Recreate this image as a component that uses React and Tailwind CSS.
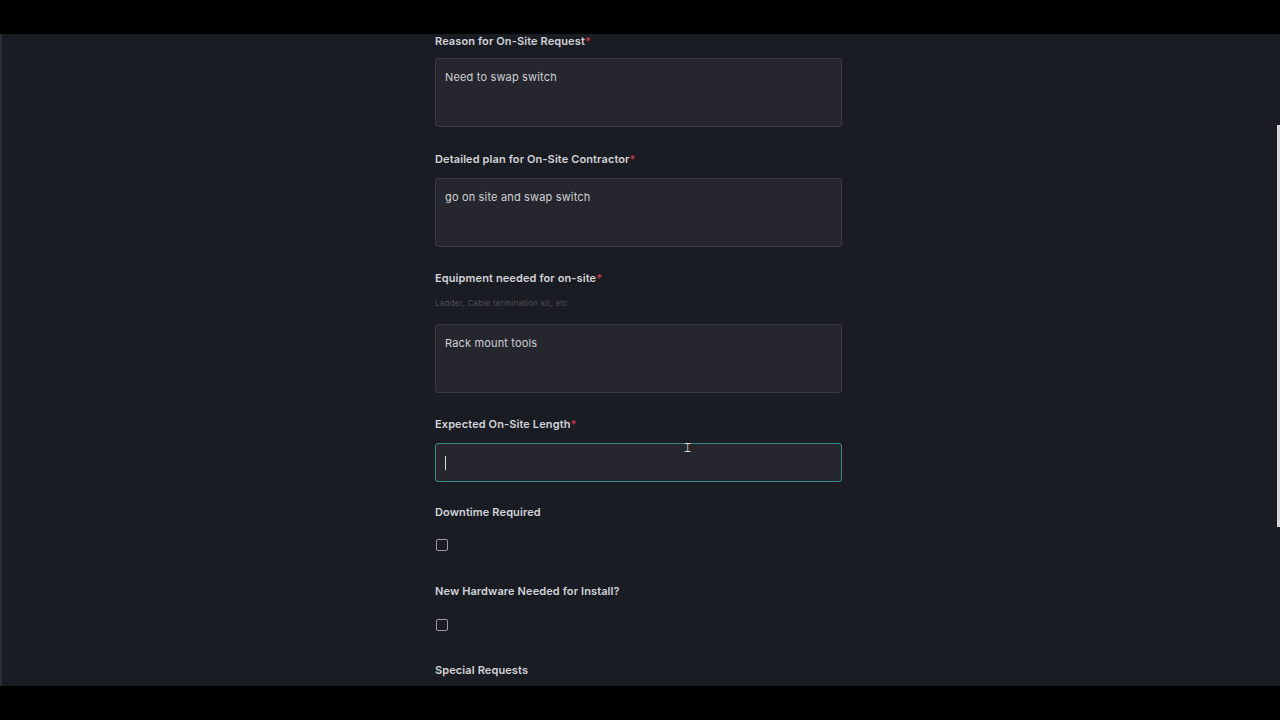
function Label({ children, required }) {
  return (
    <div className="text-[11px] leading-[10px] font-semibold text-[#d2d3d8] tracking-[0.01em]">
      {children}
      {required && <span className="text-[#c2344d]">*</span>}
    </div>
  );
}

function TextBox({ value }) {
  return (
    <div className="h-[69px] w-full rounded-[3px] border border-[#3a3b43] bg-[#26272e] px-[9px] pt-[10px] text-[11px] leading-4 tracking-[0.015em] text-[#cfd0d5]">
      {value}
    </div>
  );
}

function CheckBox() {
  return <div className="ml-px h-3 w-3 rounded-[2px] border-[1.5px] border-[#9a9ba2]" />;
}

export default function App() {
  return (
    <div
      className="flex h-[720px] w-[1280px] flex-col bg-black"
      style={{ fontFamily: "Inter, 'Noto Sans', sans-serif" }}
    >
      <div className="h-[34px] shrink-0 bg-black" />
      <div className="flex h-[652px] shrink-0">
        <div className="w-[2px] bg-[#2a2d36]" />
        <div className="flex-1 overflow-hidden bg-[#1a1c23]">
          <div className="ml-[433px] flex w-[407px] flex-col pt-[2px]">
            <Label required>Reason for On-Site Request</Label>
            <div className="mt-[12px]">
              <TextBox value="Need to swap switch" />
            </div>

            <div className="mt-[27px]">
              <Label required>Detailed plan for On-Site Contractor</Label>
            </div>
            <div className="mt-[14px]">
              <TextBox value="go on site and swap switch" />
            </div>

            <div className="mt-[26px]">
              <Label required>Equipment needed for on-site</Label>
            </div>
            <div className="mt-[15px] text-[8px] leading-[10px] tracking-[0.03em] text-[#4d4f57]">
              Ladder, Cable termination kit, etc
            </div>
            <div className="mt-4">
              <TextBox value="Rack mount tools" />
            </div>

            <div className="mt-[26px]">
              <Label required>Expected On-Site Length</Label>
            </div>
            <div className="relative mt-[14px] flex h-[39px] items-center rounded-[3px] border border-[#3b8a8a] bg-[#26272e] px-[9px]">
              <div className="h-[14px] w-px bg-[#d8d9de]" />
              <span className="absolute left-[247px] -top-[5px] text-[13px] leading-4 text-[#e0e0e0]">𝙸</span>
            </div>

            <div className="mt-[25px]">
              <Label>Downtime Required</Label>
            </div>
            <div className="mt-[22px]">
              <CheckBox />
            </div>

            <div className="mt-[35px]">
              <Label>New Hardware Needed for Install?</Label>
            </div>
            <div className="mt-[23px]">
              <CheckBox />
            </div>

            <div className="mt-[34px]">
              <Label>Special Requests</Label>
            </div>
          </div>
        </div>
        <div className="flex w-[3px] flex-col bg-[#1a1c23]">
          <div className="h-[91px]" />
          <div className="h-[402px] bg-[#d6d6da]" />
        </div>
      </div>
      <div className="flex-1 bg-black" />
    </div>
  );
}
